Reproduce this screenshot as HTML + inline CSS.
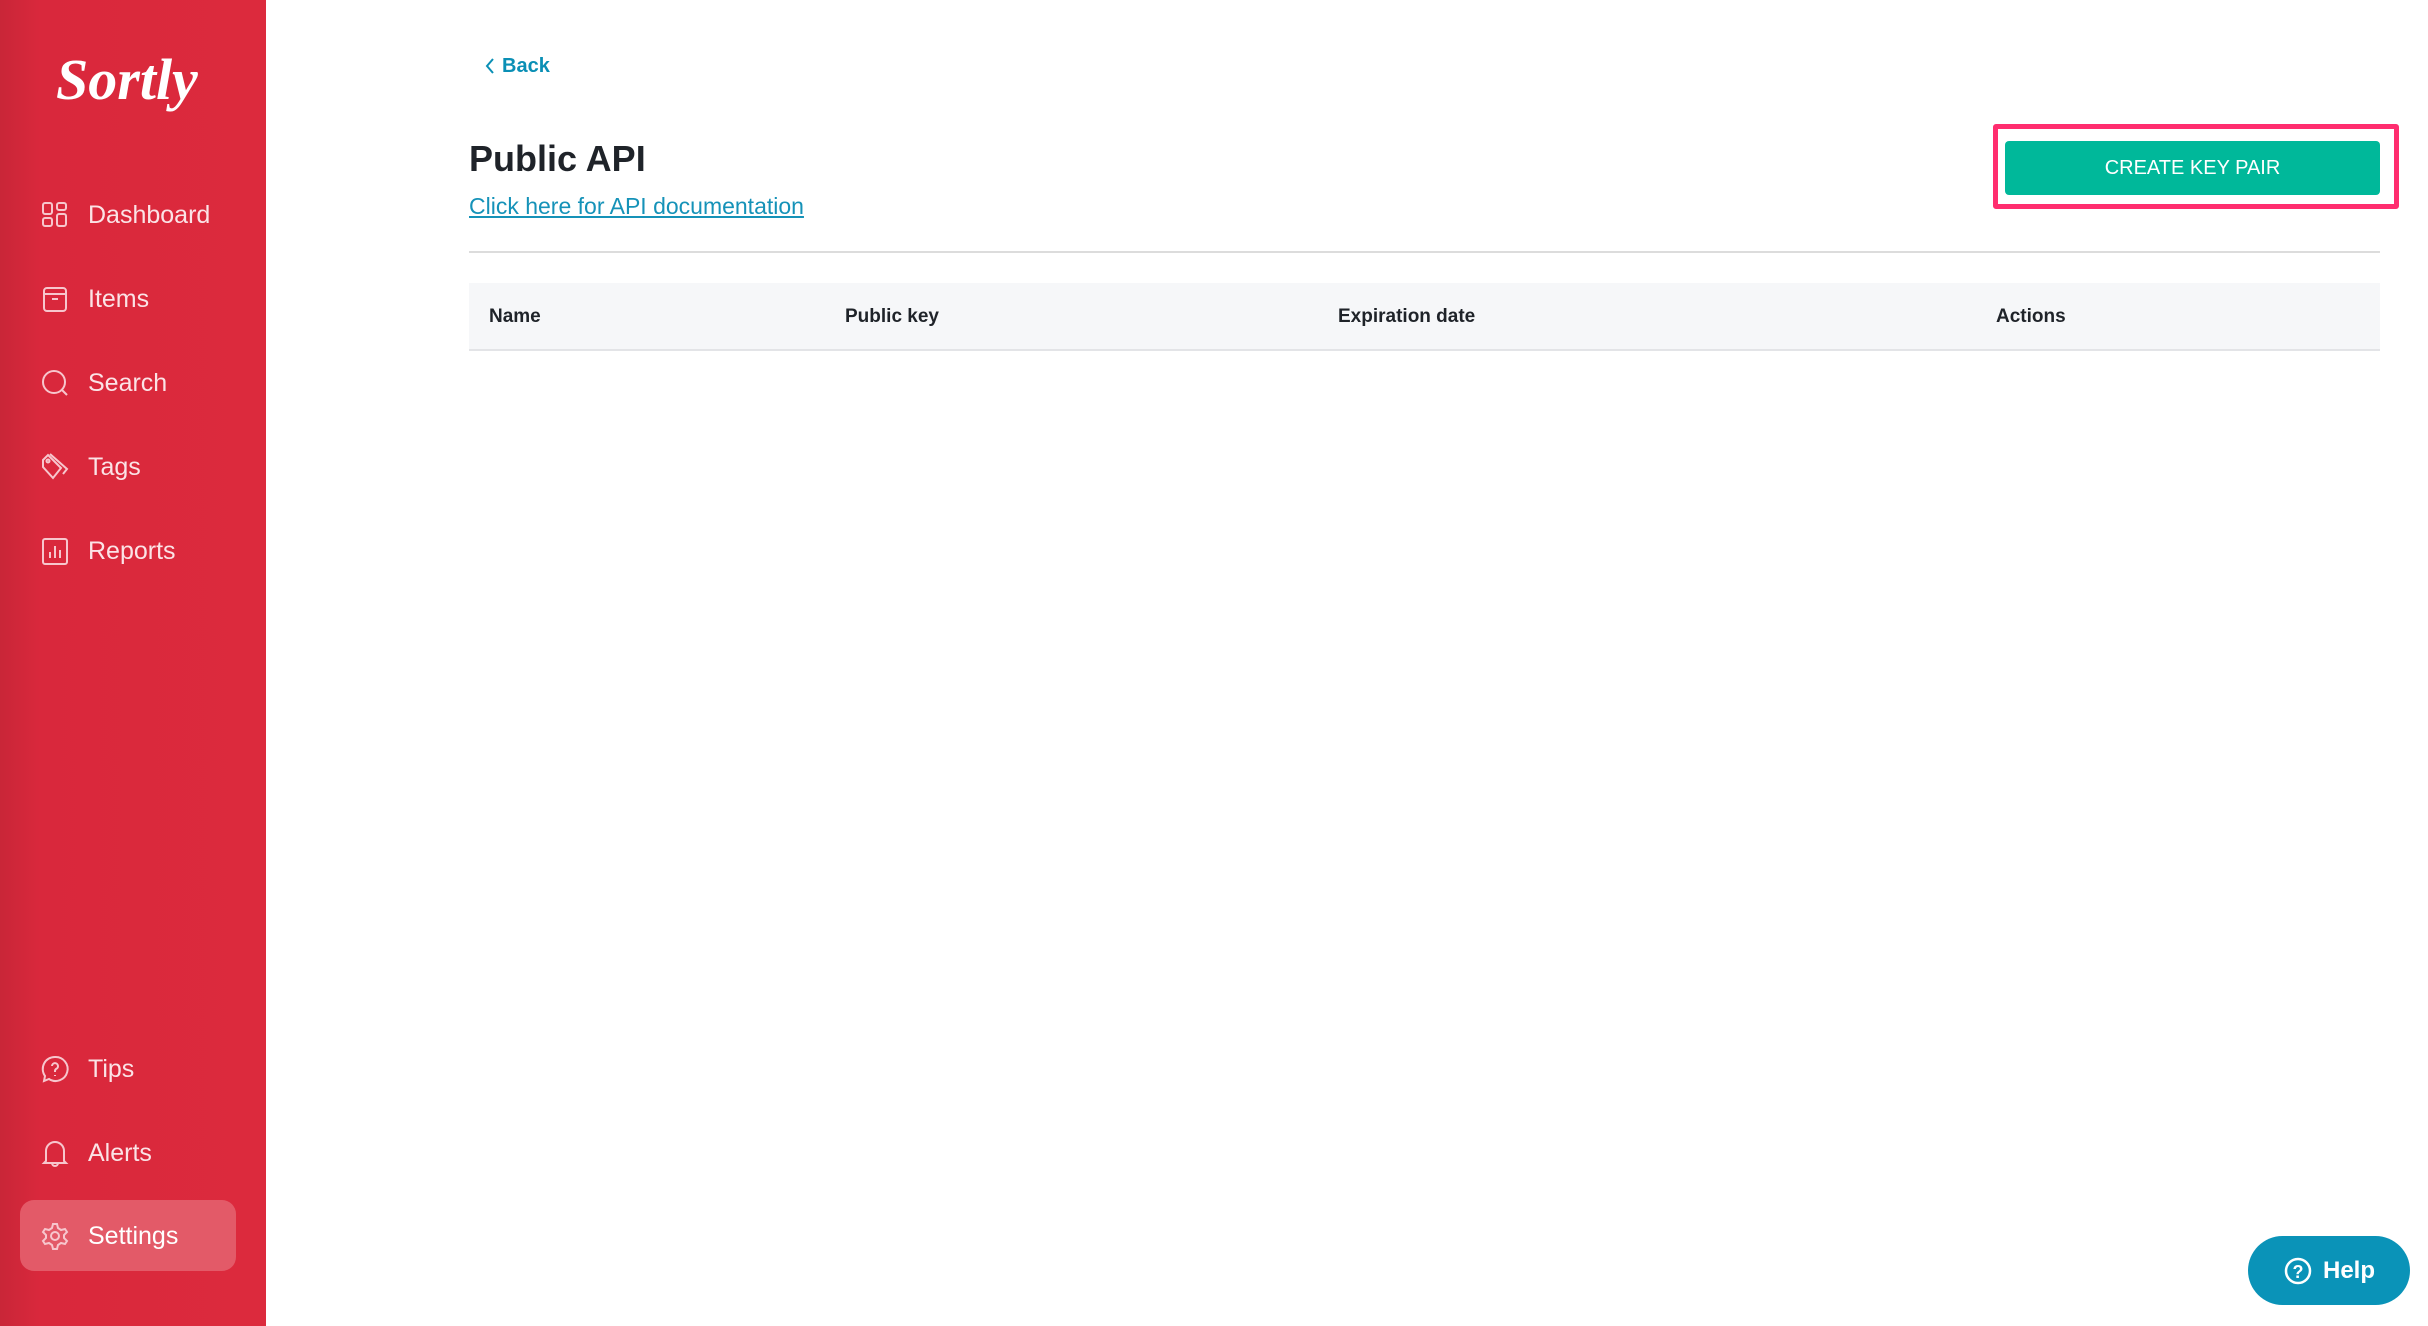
<!DOCTYPE html>
<html><head><meta charset="utf-8"><style>
*{margin:0;padding:0;box-sizing:border-box}
body{width:2428px;height:1326px;background:#fff;font-family:"Liberation Sans",sans-serif;position:relative;overflow:hidden}
.side{position:absolute;left:0;top:0;width:266px;height:1326px;background:linear-gradient(90deg,#c92638 0px,#d9283c 40px,#dc2a3d 100%)}
.logo{position:absolute;left:56px;top:46px;color:#fff;font:italic bold 58px "Liberation Serif",serif;letter-spacing:0px}
.nav{position:absolute;left:0;width:266px;height:60px;display:flex;align-items:center;color:#fbe3e6;font-size:25px}
.nav svg{position:absolute;left:40px;width:30px;height:30px;fill:none;stroke:#f7c6cd;stroke-width:2}
.nav span{position:absolute;left:88px}
.sel{position:absolute;left:20px;top:1200px;width:216px;height:71px;background:#e35a68;border-radius:14px}
.abs{position:absolute}
</style></head><body>
<div class="side">
<div class="logo">Sortly</div>
<div class="nav" style="top:185px"><svg viewBox="0 0 30 30"><rect x="3" y="3" width="9" height="11" rx="2"/><rect x="17" y="3" width="9" height="7" rx="2"/><rect x="3" y="18" width="9" height="8" rx="2"/><rect x="17" y="14" width="9" height="12" rx="2"/></svg><span>Dashboard</span></div>
<div class="nav" style="top:269px"><svg viewBox="0 0 30 30"><rect x="4" y="4" width="22" height="23" rx="3"/><path d="M4 10h22M12 15h6"/></svg><span>Items</span></div>
<div class="nav" style="top:353px"><svg viewBox="0 0 30 30"><circle cx="14" cy="14" r="11"/><path d="M22 22l5 5"/></svg><span>Search</span></div>
<div class="nav" style="top:437px"><svg viewBox="0 0 30 30"><path d="M3 8l5-5 13 13-8 10L3 15z"/><circle cx="8" cy="9" r="1.5"/><path d="M10 2l17 15-4 5"/></svg><span>Tags</span></div>
<div class="nav" style="top:521px"><svg viewBox="0 0 30 30"><rect x="3" y="3" width="24" height="25" rx="2"/><path d="M10 22v-6M15 22v-12M20 22v-8"/></svg><span>Reports</span></div>
<div class="nav" style="top:1039px"><svg viewBox="0 0 30 30"><path d="M15 3a12 12 0 1 1-6 22l-5 2 1-5A12 12 0 0 1 15 3z"/><path d="M12 12a3 3 0 1 1 4 3c-1 1-1 1-1 3M15 21v1"/></svg><span>Tips</span></div>
<div class="nav" style="top:1123px"><svg viewBox="0 0 30 30"><path d="M6 23V13a9 9 0 0 1 18 0v10l2 2H4zM12 25a3 3 0 0 0 6 0"/></svg><span>Alerts</span></div>
<div class="sel"></div>
<div class="nav" style="top:1206px;color:#fff"><svg viewBox="0 0 30 30"><circle cx="15" cy="15" r="4"/><path d="M13 3h4l1 4 3 2 4-1 2 3-3 3v3l3 3-2 3-4-1-3 2-1 4h-4l-1-4-3-2-4 1-2-3 3-3v-3l-3-3 2-3 4 1 3-2z"/></svg><span>Settings</span></div>
</div>

<svg class="abs" style="left:484px;top:57px" width="12" height="18" viewBox="0 0 12 18"><path d="M9 2L3 9l6 7" fill="none" stroke="#0a8fb5" stroke-width="2"/></svg>
<div class="abs" style="left:502px;top:55px;font-size:20px;font-weight:bold;color:#0a8fb5">Back</div>
<div class="abs" style="left:469px;top:138px;font-size:36px;font-weight:bold;color:#1f2329">Public API</div>
<div class="abs" style="left:469px;top:193px;font-size:23px;color:#1592b8;text-decoration:underline">Click here for API documentation</div>
<div class="abs" style="left:469px;top:251px;width:1911px;height:2px;background:#dcdcdc"></div>
<div class="abs" style="left:469px;top:283px;width:1911px;height:68px;background:#f6f7f9;border-bottom:2px solid #e3e4e7"></div>
<div class="abs" style="left:489px;top:306px;font-size:19px;font-weight:bold;color:#1f2329">Name</div>
<div class="abs" style="left:845px;top:306px;font-size:19px;font-weight:bold;color:#1f2329">Public key</div>
<div class="abs" style="left:1338px;top:306px;font-size:19px;font-weight:bold;color:#1f2329">Expiration date</div>
<div class="abs" style="left:1996px;top:306px;font-size:19px;font-weight:bold;color:#1f2329">Actions</div>

<div class="abs" style="left:1993px;top:124px;width:406px;height:85px;border:5px solid #ff2d6f;border-radius:3px"></div>
<div class="abs" style="left:2005px;top:141px;width:375px;height:54px;background:#00b89a;border-radius:4px;color:#fff;font-size:20px;display:flex;align-items:center;justify-content:center">CREATE KEY PAIR</div>

<div class="abs" style="left:2248px;top:1236px;width:162px;height:69px;background:#0a93b8;border-radius:35px;color:#fff;font-size:24px;font-weight:bold;display:flex;align-items:center;justify-content:center;gap:10px">
<svg width="30" height="30" viewBox="0 0 30 30"><circle cx="15" cy="15" r="12" fill="none" stroke="#fff" stroke-width="2.5"/><text x="15" y="22" text-anchor="middle" font-size="18" font-weight="bold" fill="#fff" font-family="Liberation Sans">?</text></svg>Help</div>
</body></html>
